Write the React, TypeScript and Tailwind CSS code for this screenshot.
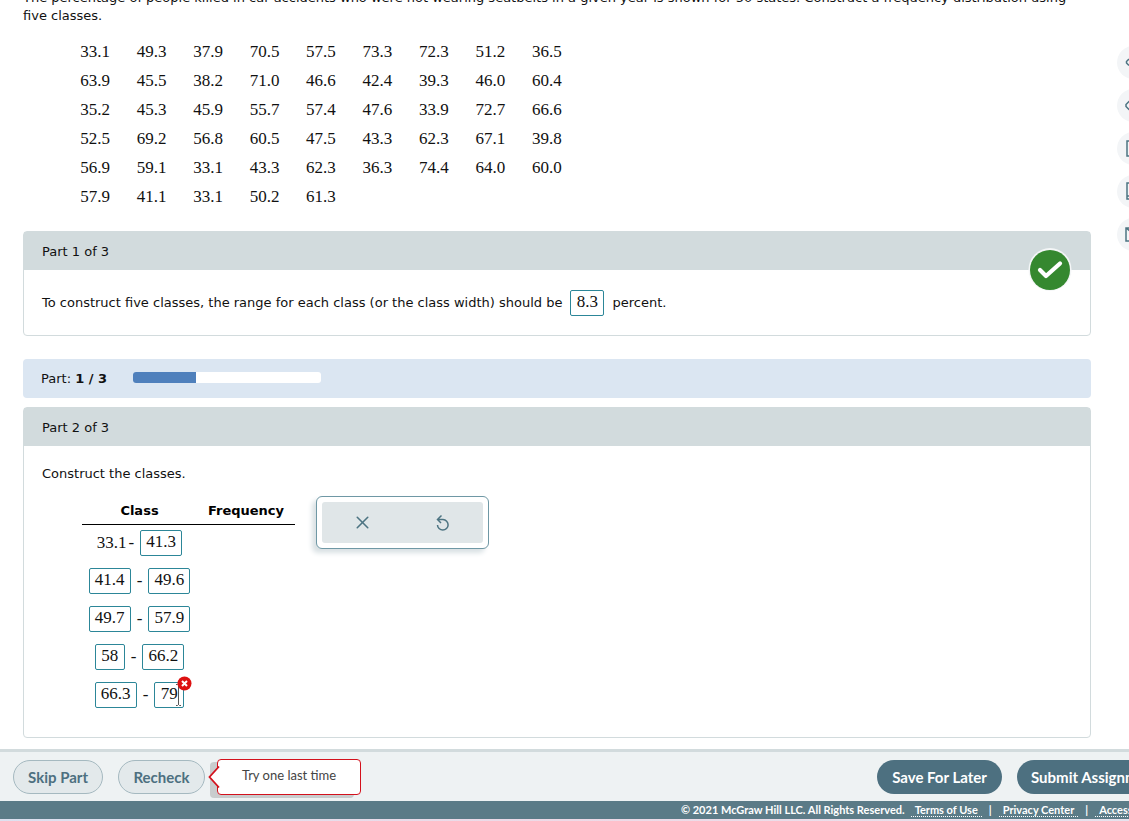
import type { ReactNode } from "react";
import { X } from "lucide-react";

const data = [
  ["33.1", "49.3", "37.9", "70.5", "57.5", "73.3", "72.3", "51.2", "36.5"],
  ["63.9", "45.5", "38.2", "71.0", "46.6", "42.4", "39.3", "46.0", "60.4"],
  ["35.2", "45.3", "45.9", "55.7", "57.4", "47.6", "33.9", "72.7", "66.6"],
  ["52.5", "69.2", "56.8", "60.5", "47.5", "43.3", "62.3", "67.1", "39.8"],
  ["56.9", "59.1", "33.1", "43.3", "62.3", "36.3", "74.4", "64.0", "60.0"],
  ["57.9", "41.1", "33.1", "50.2", "61.3", "", "", "", ""],
];

const classes = [
  { low: "33.1", high: "41.3", given: true },
  { low: "41.4", high: "49.6" },
  { low: "49.7", high: "57.9" },
  { low: "58", high: "66.2" },
  { low: "66.3", high: "79", wrong: true },
];

const serif = "font-['Liberation_Serif',serif] text-[17px]";

function Answer({ value, label }: { value: string; label: string }) {
  const width = value.length > 3 ? "w-[42px]" : value.length > 2 ? "w-[34px]" : "w-[30px]";
  return (
    <input
      aria-label={label}
      defaultValue={value}
      className={`${serif} ${width} h-[26px] rounded-xs border border-[#2c8698] bg-white pb-[2px] text-center text-[#111] outline-none`}
    />
  );
}

function Card({ title, badge, children }: { title: string; badge?: ReactNode; children: ReactNode }) {
  return (
    <section className="relative rounded-[4px] border border-[#d2dbdd]">
      <h2 className="flex h-[38px] items-center bg-[#d2dbdd] px-[18px] pt-[1px]">{title}</h2>
      {children}
      {badge}
    </section>
  );
}

function CheckBadge() {
  return (
    <svg className="absolute top-[16px] right-[18px] size-[44px]" viewBox="0 0 44 44" aria-label="Correct">
      <circle cx="22" cy="21.5" r="21.5" fill="#f4f6f7" />
      <circle cx="22" cy="22" r="20" fill="#35882f" />
      <path d="M12 22l6 6L32 15.500" fill="none" stroke="#fff" strokeWidth="4.2" strokeLinecap="round" strokeLinejoin="round" />
    </svg>
  );
}

const railIcons: { label: string; icon: ReactNode }[] = [
  { label: "Explanation", icon: <path d="M13 13.500h-1.500L9.500 15.500v1.500l2 2H13" /> },
  { label: "Navigate", icon: <path d="M13 12.500h-1L9 15.500v2l3 3h1" /> },
  { label: "Calculator", icon: <path d="M22 9H10v15h12" /> },
  { label: "Dictionary", icon: <path d="M22 8H10v16h12M10 21h12" /> },
  { label: "Message", icon: <path d="M24 10H9v13h15M9 10l8 6" /> },
];

export default function App() {
  return (
    <div className="flex min-h-screen flex-col overflow-hidden bg-white font-['DejaVu_Sans',Verdana,sans-serif] text-[13px] leading-5 text-[#111]">
      <main className="flex flex-1 overflow-hidden">
        <div className="-mt-[11px] min-w-0 flex-1 pr-[26px] pb-[11px] pl-[23px]">
          <p className="leading-[18px]">
            The percentage of people killed in car accidents who were not wearing seatbelts in a given year is shown for 50 states. Construct a frequency distribution using<br />
            five classes.
          </p>

          <table className={`${serif} mt-[12px] ml-[44px] w-[508px] table-fixed`}>
            <tbody>
              {data.map((row, r) => (
                <tr key={r} className="h-[29px]">
                  {row.map((n, c) => (
                    <td key={c} className="p-0 text-center">{n}</td>
                  ))}
                </tr>
              ))}
            </tbody>
          </table>

          <div className="mt-[20px]">
            <Card title="Part 1 of 3" badge={<CheckBadge />}>
              <p className="flex h-[65px] items-center gap-[8px] px-[18px]">
                <span>To construct five classes, the range for each class (or the class width) should be</span>
                <Answer value="8.3" label="Class width" />
                <span>percent.</span>
              </p>
            </Card>
          </div>

          <div className="mt-[23px] flex h-[39px] items-center rounded-[4px] bg-[#dbe6f2] pl-[18px]">
            <span>Part: <b>1 / 3</b></span>
            <div role="progressbar" aria-label="Parts finished" aria-valuenow={1} aria-valuemax={3} className="mb-[2px] ml-[26px] h-[11px] w-[188px] overflow-hidden rounded-[3px] bg-white">
              <div className="h-full w-1/3 bg-[#4f80bc]" />
            </div>
          </div>

          <div className="mt-[9px]">
            <Card title="Part 2 of 3">
              <div className="px-[18px] pt-[18px] pb-[23px]">
                <p>Construct the classes.</p>
                <div className="mt-[12px] ml-[40px] flex items-start gap-[21px]">
                  <table>
                    <thead>
                      <tr className="h-[28px] border-b border-black text-black">
                        <th className="w-[115px] p-0 pt-[2px]">Class</th>
                        <th className="w-[98px] p-0 pt-[2px]">Frequency</th>
                      </tr>
                    </thead>
                    <tbody>
                      {classes.map((row) => (
                        <tr key={row.low} className="h-[38px]">
                          <td className="p-0">
                            <div className={`${serif} flex items-center justify-center`}>
                              {row.given ? <span>{row.low}</span> : <Answer value={row.low} label="Lower limit" />}
                              <span className={row.given ? "mr-[6px] ml-[2px]" : "mx-[6px]"}>-</span>
                              <span className="relative flex">
                                <Answer value={row.high} label="Upper limit" />
                                {row.wrong && (
                                  <svg className="absolute -top-[6px] -right-[8px] h-[32px] w-[16px]" viewBox="0 0 16 32" aria-label="Incorrect">
                                    <path d="M0 8.500h1.500l1 1v19l-1 1H0M5 8.500H3.500l-1 1v19l1 1H5" fill="none" stroke="#555" />
                                    <circle cx="8.500" cy="7.500" r="7" fill="#dd1111" />
                                    <path d="M6 5l5 5M11 5l-5 5" stroke="#fff" strokeWidth="2" />
                                  </svg>
                                )}
                              </span>
                            </div>
                          </td>
                          <td />
                        </tr>
                      ))}
                    </tbody>
                  </table>

                  <div className="rounded-[6px] border border-[#6f98a5] bg-white p-[5px] shadow-[-4px_4px_5px_#d9e1e4]">
                    <div className="flex h-[41px] w-[161px] rounded-[3px] bg-[#e0e6e8] text-[#4d7482]">
                      <button type="button" aria-label="Clear" className="flex flex-1 items-center justify-center">
                        <X size={21} strokeWidth={1.8} />
                      </button>
                      <button type="button" aria-label="Undo" className="flex flex-1 items-center justify-center">
                        <svg width="16" height="18" viewBox="0 0 16 18" fill="none" stroke="currentColor" strokeWidth="1.500">
                          <path d="M3.200 5.500H8a5.300 5.300 0 1 1-5.500 5.400M6.500 1.500l-4 4 3.500 3.500" />
                        </svg>
                      </button>
                    </div>
                  </div>
                </div>
              </div>
            </Card>
          </div>
        </div>

        <aside className="flex w-[12px] flex-col gap-[10px] overflow-hidden pt-[46px]">
          {railIcons.map(({ label, icon }) => (
            <button key={label} type="button" aria-label={label} className="size-[33px] rounded-full bg-[#f3f5f7] text-[#4d7482]">
              <svg width="33" height="33" viewBox="0 0 33 33" fill="none" stroke="currentColor" strokeWidth="1.500">{icon}</svg>
            </button>
          ))}
        </aside>
      </main>

      <footer className="font-[Lato,sans-serif] whitespace-nowrap">
        <div className="flex h-[52px] items-center overflow-hidden border-t-[3px] border-[#d2dbdd] bg-[#eef2f3] pl-[13px] text-[15px] font-bold">
          <button type="button" className="h-[34px] w-[90px] rounded-full border border-[#a5b9c0] bg-[#e3e9eb] text-[#4d7080]">Skip Part</button>
          <button type="button" className="ml-[15px] h-[34px] w-[87px] rounded-full border border-[#a5b9c0] bg-[#e3e9eb] text-[#4d7080]">Recheck</button>
          <div role="status" className="relative ml-[12px] flex h-[36px] w-[144px] items-center justify-center rounded-[4px] border border-[#d3111c] bg-white pb-[3px] text-[13px] font-normal text-[#444] shadow-[-7px_3px_0_#c9cccd]">
            Try one last time
            <svg className="absolute top-[5px] -left-[10px]" width="12" height="24" viewBox="0 0 12 24" aria-hidden="true">
              <path d="M11.500 1L1.500 12l10 11z" fill="#fff" />
              <path d="M11 1.500L1.500 12 11 22.500" fill="none" stroke="#d3111c" strokeWidth="1.800" />
            </svg>
          </div>
          <div className="ml-auto flex w-[252px] gap-[15px]">
            <button type="button" className="h-[34px] w-[125px] shrink-0 rounded-full bg-[#4d7080] text-white">Save For Later</button>
            <button type="button" className="h-[34px] shrink-0 rounded-full bg-[#4d7080] px-[14px] text-white">Submit Assignment</button>
          </div>
        </div>
        <div className="flex h-[18px] justify-end overflow-hidden bg-[#5b7b87] text-[11px] leading-[18px] font-bold text-white">
          <div className="flex w-[448px] items-center">
            <span className="shrink-0">© 2021 McGraw Hill LLC. All Rights Reserved.</span>
            <a href="#terms" className="ml-[6px] shrink-0 border-b border-dotted border-white px-[4px] leading-[12px]">Terms of Use</a>
            <span className="mx-[7px]">|</span>
            <a href="#privacy" className="shrink-0 border-b border-dotted border-white px-[4px] leading-[12px]">Privacy Center</a>
            <span className="mx-[7px]">|</span>
            <a href="#accessibility" className="shrink-0 border-b border-dotted border-white px-[4px] leading-[12px]">Accessibility</a>
          </div>
        </div>
        <div className="h-[2px] bg-linear-to-r from-[#dde1f0] via-[#eed9e6] to-[#e6e3ee]" />
      </footer>
    </div>
  );
}
